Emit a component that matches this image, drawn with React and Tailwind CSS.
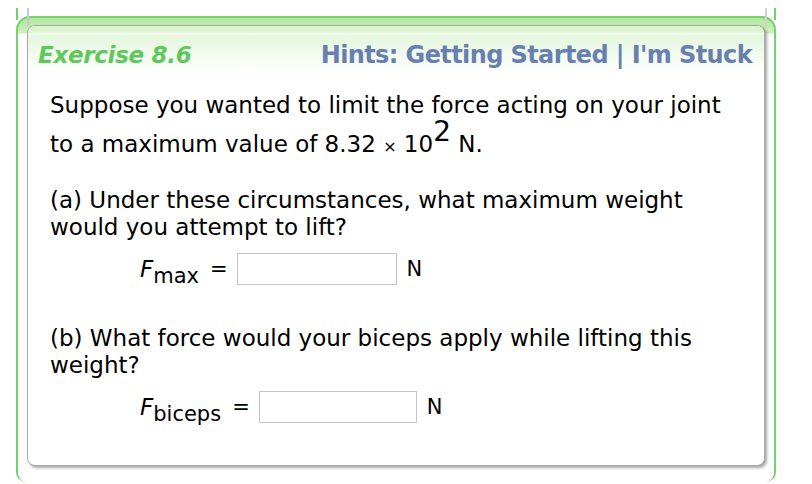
import React from "react";

const font = { fontFamily: '"DejaVu Sans", Verdana, sans-serif' };

const Answer = ({ sub, boxW }) => (
    <div className="flex items-center text-[23px] leading-none">
        <span className="italic">F</span>
        <span className="relative top-[7px] text-[21px]">{sub}</span>
        <span className="ml-[11px] mr-[9px] text-[21px]">=</span>
        <input
            type="text"
            className={`${boxW} h-[32px] border border-[#c4c4c4] bg-white outline-none`}
        />
        <span className="ml-[10px] text-[21px]">N</span>
    </div>
);

export default function App() {
    return (
        <div className="relative w-[812px] h-[484px] bg-white pl-[16px] pt-[16px]" style={font}>
            {/* little page edges above the box */}
            <div className="absolute left-[16px] top-[8px] w-[2px] h-[12px] bg-[#6fd36a]" />
            <div className="absolute left-[27px] top-[8px] w-[2px] h-[18px] bg-[#c8c8c8]" />
            <div className="absolute left-[765px] top-[8px] w-[2px] h-[18px] bg-[#d0d0d0]" />
            <div className="absolute left-[774px] top-[8px] w-[2px] h-[12px] bg-[#6fd36a]" />

            <div className="w-[760px] h-[466px] border-x-2 border-t-2 border-[#74d46c] rounded-t-[14px] rounded-b-[10px] bg-[linear-gradient(to_bottom,#b6e6a0_0px,#cdefbd_15px,#ffffff_16px,#ffffff_100%)] px-[9px] pt-[7px]">
                <div className="h-[441px] border border-[#a9a9a9] rounded-[8px] bg-white shadow-[2px_2px_3px_rgba(0,0,0,0.35)] overflow-hidden">
                    <div className="h-[46px] bg-[linear-gradient(to_bottom,#d9f1cd_0px,#e2f5d9_7px,#ffffff_8px,#e4f6dc_9px,#ffffff_46px)] flex items-end justify-between pl-[10px] pr-[12px] pb-[5px] leading-none">
                        <span className="text-[23px] font-bold italic text-[#5ec95a] tracking-[-0.3px]">
                            Exercise 8.6
                        </span>
                        <span className="text-[24px] font-bold text-[#6880b0] tracking-[-0.6px]">
                            Hints: Getting Started | I'm Stuck
                        </span>
                    </div>

                    <div className="pl-[22px] pr-[10px] pt-[14px] text-black text-[23px]">
                        <p className="leading-[38px] whitespace-nowrap">
                            Suppose you wanted to limit the force acting on your joint
                            <br />
                            to a maximum value of 8.32 <span className="text-[16px]">×</span> 10
                            <span className="relative top-[-11px] text-[28px]">2</span> N.
                        </p>

                        <p className="mt-[21px] leading-[27px] whitespace-nowrap">
                            (a) Under these circumstances, what maximum weight
                            <br />
                            would you attempt to lift?
                        </p>
                        <div className="mt-[12px] pl-[90px]">
                            <Answer sub="max" boxW="w-[160px]" />
                        </div>

                        <p className="mt-[40px] leading-[27px] whitespace-nowrap">
                            (b) What force would your biceps apply while lifting this
                            <br />
                            weight?
                        </p>
                        <div className="mt-[12px] pl-[90px]">
                            <Answer sub="biceps" boxW="w-[158px]" />
                        </div>
                    </div>
                </div>
            </div>
        </div>
    );
}
